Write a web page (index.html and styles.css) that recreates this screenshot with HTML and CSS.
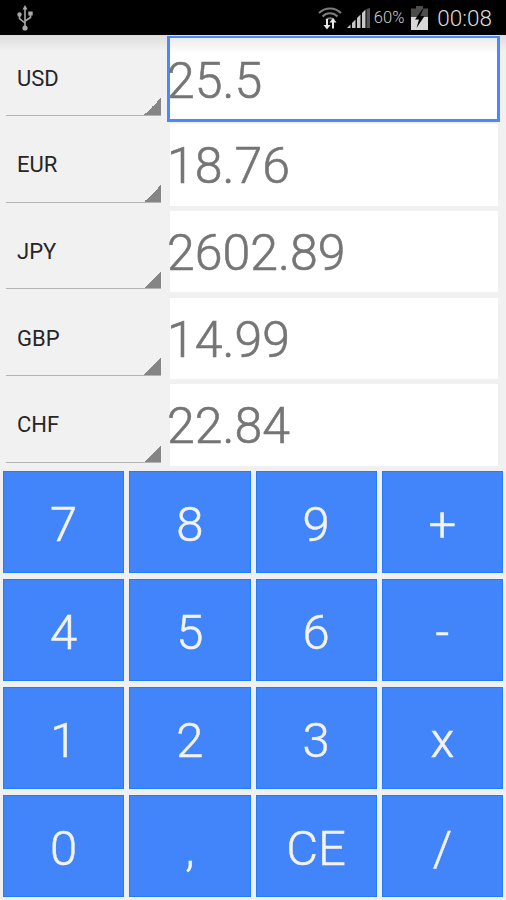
FILE: index.html
```html
<!DOCTYPE html>
<html lang="en">
<head>
<meta charset="utf-8">
<title>Currency calculator</title>
<link rel="stylesheet" href="styles.css">
</head>
<body>
<div class="app">
  <header class="status">
    <svg class="usb" viewBox="0 0 16 26" width="16" height="26">
      <g fill="none" stroke="#a8a8a8" stroke-width="1.600">
        <path d="M8 4v19"/>
        <path d="M2.500 10v3.500L8 18"/>
        <path d="M13.500 9v3.500L8 16"/>
      </g>
      <path d="M8 0l2.500 4.500h-5z" fill="#a8a8a8"/>
      <circle cx="2.500" cy="9.500" r="2.200" fill="#a8a8a8"/>
      <rect x="11.300" y="6.500" width="4.400" height="4" fill="#a8a8a8"/>
      <circle cx="8" cy="23" r="2.600" fill="#a8a8a8"/>
    </svg>
    <div class="status-right">
      <svg class="wifi" viewBox="0 0 24 25" width="24" height="25">
        <path d="M1 8a15.500 15.500 0 0 1 22 0" fill="none" stroke="#7c7c7c" stroke-width="2"/>
        <path d="M4.500 11.500a10.500 10.500 0 0 1 15 0" fill="none" stroke="#7c7c7c" stroke-width="2"/>
        <path d="M8 15a5.600 5.600 0 0 1 8 0" fill="none" stroke="#7c7c7c" stroke-width="2"/>
        <path d="M8 14v6h-2.500l3.500 4.500 3.500-4.500H10v-6zM15 13l-3.500 4.500H14v6h2v-6h2.500z" fill="#e8e8e8"/>
      </svg>
      <svg class="signal" viewBox="0 0 23 20" width="23" height="20">
        <path d="M0 20h3.500v-3.500z" fill="#c8c8c8"/>
        <path d="M5 20h3.500v-8.500L5 15z" fill="#c8c8c8"/>
        <path d="M10 20h3.500V6.500L10 10z" fill="#c8c8c8"/>
        <path d="M15 20h3.500V1.500L15 5z" fill="#c8c8c8"/>
        <path d="M19.500 20H23V0l-3.500 1z" fill="#555"/>
      </svg>
      <span class="pct">60%</span>
      <svg class="battery" viewBox="0 0 17 24" width="17" height="24">
        <path d="M5 0h7v2.500h5V24H0V2.500h5z" fill="#4c4c4c"/>
        <path d="M0 11h17v13H0z" fill="#d8d8d8"/>
        <path d="M11.500 3L4 13.500h4L5.500 22 13.500 10h-4.200l3-7z" fill="#000"/>
      </svg>
      <span class="clock">00:08</span>
    </div>
  </header>

  <main class="rows">
    <div class="row">
      <div class="spinner"><span class="code">USD</span></div>
      <div class="amount focused">25.5</div>
    </div>
    <div class="row">
      <div class="spinner"><span class="code">EUR</span></div>
      <div class="amount">18.76</div>
    </div>
    <div class="row">
      <div class="spinner"><span class="code">JPY</span></div>
      <div class="amount">2602.89</div>
    </div>
    <div class="row">
      <div class="spinner"><span class="code">GBP</span></div>
      <div class="amount">14.99</div>
    </div>
    <div class="row">
      <div class="spinner"><span class="code">CHF</span></div>
      <div class="amount">22.84</div>
    </div>
  </main>

  <section class="keypad">
    <button class="key">7</button>
    <button class="key">8</button>
    <button class="key">9</button>
    <button class="key">+</button>
    <button class="key">4</button>
    <button class="key">5</button>
    <button class="key">6</button>
    <button class="key">-</button>
    <button class="key">1</button>
    <button class="key">2</button>
    <button class="key">3</button>
    <button class="key">x</button>
    <button class="key">0</button>
    <button class="key">,</button>
    <button class="key">CE</button>
    <button class="key">/</button>
  </section>
</div>
</body>
</html>
```
FILE: styles.css
```css
* { box-sizing: border-box; }
html, body { margin: 0; padding: 0; }
body {
  width: 506px;
  height: 900px;
  overflow: hidden;
  background: #f0f0f0;
  font-family: Roboto, "Liberation Sans", sans-serif;
}
.app {
  display: flex;
  flex-direction: column;
  height: 900px;
}
.status {
  height: 35px;
  flex: none;
  background: #000;
  display: flex;
  align-items: center;
  justify-content: space-between;
  padding: 0 14px 0 17px;
}
.usb { display: block; }
.status-right {
  display: flex;
  align-items: center;
}
.wifi { margin-right: 5px; }
.signal { margin-right: 4px; }
.pct {
  color: #cfcfcf;
  font-size: 16.500px;
  font-weight: 300;
  margin-right: 7px;
}
.battery { margin-right: 9px; }
.clock {
  color: #dcdcdc;
  font-size: 22.500px;
  font-weight: 300;
}
.rows {
  flex: none;
  height: 433px;
  background: linear-gradient(#dcdcdc, #f1f1f1 16px);
  display: grid;
  grid-template-rows: repeat(5, 86.670px);
  padding-top: 1.630px;
}
.row {
  display: grid;
  grid-template-columns: 155px 328px;
  column-gap: 9px;
  padding-left: 6px;
  height: 86.670px;
}
.spinner {
  position: relative;
  height: 79.500px;
  border-bottom: 1px solid #b4b4b4;
  display: flex;
  align-items: center;
  padding-left: 11px;
}
.spinner::after {
  content: "";
  position: absolute;
  right: 0;
  bottom: 0;
  width: 17px;
  height: 17px;
  background: linear-gradient(135deg, transparent 50%, #858585 50%);
}
.code {
  font-size: 22px;
  color: #262626;
  position: relative;
  top: 2.400px;
}
.amount {
  height: 81.500px;
  margin-top: 1px;
  background: #fff;
  color: #757575;
  font-size: 50px;
  font-weight: 300;
  -webkit-text-stroke: 0.600px #757575;
  line-height: 85px;
  text-indent: -3px;
}
.amount.focused {
  height: 86px;
  margin-top: -1px;
  margin-left: -3px;
  margin-right: -2px;
  border: 3px solid #4889ff;
  border-top-width: 2px;
  line-height: 86px;
  text-indent: -3px;
  background: linear-gradient(#ececec, #fff 16px);
}
.keypad {
  flex: none;
  display: grid;
  grid-template-columns: repeat(4, 1fr);
  grid-template-rows: repeat(4, 102px);
  gap: 6px 5px;
  padding: 3px 3px 0;
}
.key {
  appearance: none;
  margin: 0;
  padding: 4px 0 0;
  border: 1px solid #1f7dff;
  border-radius: 0;
  background: #4285fa;
  color: #f3f3f3;
  font-family: inherit;
  font-size: 49px;
  font-weight: 300;
  -webkit-text-stroke: 0.500px #f3f3f3;
}
```
